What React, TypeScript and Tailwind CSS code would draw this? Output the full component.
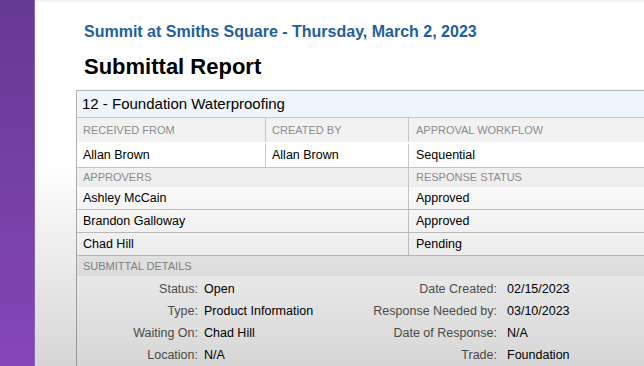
import React from "react";

const approvers = [
  { name: "Ashley McCain", status: "Approved" },
  { name: "Brandon Galloway", status: "Approved" },
  { name: "Chad Hill", status: "Pending" },
];

const leftDetails = [
  ["Status:", "Open"],
  ["Type:", "Product Information"],
  ["Waiting On:", "Chad Hill"],
  ["Location:", "N/A"],
];

const rightDetails = [
  ["Date Created:", "02/15/2023"],
  ["Response Needed by:", "03/10/2023"],
  ["Date of Response:", "N/A"],
  ["Trade:", "Foundation"],
];

export default function App() {
  return (
    <div className="relative flex h-[366px] w-[644px] overflow-hidden font-['Liberation_Sans',Arial,sans-serif] text-black">
      <div className="w-[35px] shrink-0 border-r border-[#8b5fc0] bg-linear-to-b from-[#653a93] to-[#8646b8]" />

      <div className="relative min-w-0 flex-1 border-t-2 border-[#f1f2f6] bg-white">
        <div className="pl-[49px] pt-[20px]">
          <h2 className="text-[16px] font-bold leading-[20px] text-[#23609b]">
            Summit at Smiths Square - Thursday, March 2, 2023
          </h2>
          <h1 className="mt-[11px] text-[22px] font-bold leading-[28px]">
            Submittal Report
          </h1>
        </div>

        <div className="ml-[41px] mt-[9px] w-[640px] border-l border-t border-[#b0b0b0]">
          <div className="flex h-[27px] items-center border-b border-[#c4c4c4] bg-[#eef6fb] pl-[5px] text-[15px]">
            12 - Foundation Waterproofing
          </div>

          <div className="flex h-[24px] items-center bg-[#f2f2f2] text-[11px] uppercase text-[#8c8c8c]">
            <div className="flex h-full w-[189px] items-center border-r border-[#c8c8c8] pl-[6px]">
              Received From
            </div>
            <div className="flex h-full w-[143px] items-center border-r border-[#c8c8c8] pl-[6px]">
              Created By
            </div>
            <div className="pl-[7px]">Approval Workflow</div>
          </div>
          <div className="flex h-[26px] items-center border-b border-[#c4c4c4] bg-white pt-[2px] text-[12.5px]">
            <div className="flex h-full w-[189px] items-center border-r border-[#c8c8c8] pl-[6px]">
              Allan Brown
            </div>
            <div className="flex h-full w-[143px] items-center border-r border-[#c8c8c8] pl-[6px]">
              Allan Brown
            </div>
            <div className="pl-[7px]">Sequential</div>
          </div>

          <div className="flex h-[19px] items-center bg-[#f2f2f2] text-[11px] uppercase text-[#8c8c8c]">
            <div className="flex h-full w-[332px] items-center border-r border-[#c8c8c8] pl-[6px]">
              Approvers
            </div>
            <div className="pl-[7px]">Response Status</div>
          </div>
          {approvers.map((a) => (
            <div
              key={a.name}
              className="flex h-[23px] items-center border-b border-[#c4c4c4] bg-white text-[12.5px]"
            >
              <div className="flex h-full w-[332px] items-center border-r border-[#c8c8c8] pl-[6px]">
                {a.name}
              </div>
              <div className="pl-[7px]">{a.status}</div>
            </div>
          ))}

          <div className="flex h-[20px] items-center bg-[#f2f2f2] pl-[6px] text-[11px] uppercase text-[#8c8c8c]">
            Submittal Details
          </div>

          <div className="flex pt-[2px] text-[12.5px] leading-[22px]">
            <div className="grid w-[253px] grid-cols-[121px_auto] gap-x-[6px]">
              {leftDetails.map(([label, value]) => (
                <React.Fragment key={label}>
                  <span className="text-right text-[#555]">{label}</span>
                  <span>{value}</span>
                </React.Fragment>
              ))}
            </div>
            <div className="grid grid-cols-[167px_auto] gap-x-[10px]">
              {rightDetails.map(([label, value]) => (
                <React.Fragment key={label}>
                  <span className="text-right text-[#555]">{label}</span>
                  <span>{value}</span>
                </React.Fragment>
              ))}
            </div>
          </div>
        </div>

        <div className="pointer-events-none absolute inset-x-0 bottom-0 top-[158px] bg-linear-to-b from-transparent to-black/[0.16]" />
      </div>
    </div>
  );
}
